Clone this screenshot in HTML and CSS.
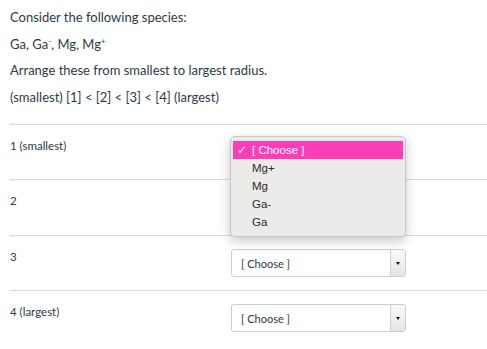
FILE: index.html
```html
<!DOCTYPE html>
<html lang="en">
<head>
    <meta charset="UTF-8">
    <title>Question</title>
    <link rel="stylesheet" href="styles.css">
</head>
<body>
    <div id="question">
        <div class="text">
            <p>Consider the following species:</p>
            <p>Ga, Ga<sup>-</sup>, Mg, Mg<sup>+</sup></p>
            <p>Arrange these from smallest to largest radius.</p>
            <p>(smallest) [1] &lt; [2] &lt; [3] &lt; [4] (largest)</p>
        </div>
        <div class="answers">
            <div class="row">
                <div class="label">1 (smallest)</div>
                <div class="select-wrap">
                    <div class="select"><span>[ Choose ]</span><i class="arrow"></i></div>
                    <ul class="menu">
                        <li class="on"><b>✓</b>[ Choose ]</li>
                        <li>Mg+</li>
                        <li>Mg</li>
                        <li>Ga-</li>
                        <li>Ga</li>
                    </ul>
                </div>
            </div>
            <div class="row">
                <div class="label">2</div>
                <div class="select-wrap">
                    <div class="select"><span>[ Choose ]</span><i class="arrow"></i></div>
                </div>
            </div>
            <div class="row">
                <div class="label">3</div>
                <div class="select-wrap">
                    <div class="select"><span>[ Choose ]</span><i class="arrow"></i></div>
                </div>
            </div>
            <div class="row">
                <div class="label">4 (largest)</div>
                <div class="select-wrap">
                    <div class="select"><span>[ Choose ]</span><i class="arrow"></i></div>
                </div>
            </div>
        </div>
    </div>
</body>
</html>
```

FILE: styles.css
```css
body{
    margin: 0;
    background: #fff;
    font-family: Lato, "Liberation Sans", sans-serif;
    color: #2d3b45;
}
#question{
    padding: 0 0 0 10px;
}
.text{
    padding-top: 9px;
    font-size: 13px;
    line-height: 16px;
}
.text p{
    margin: 0 0 10.7px 0;
}
.text sup{
    font-size: 8px;
    line-height: 0;
    vertical-align: 5px;
}
.answers{
    margin-top: 19px;
}
.row{
    display: flex;
    height: 55px;
    border-top: 1px solid #d9d9d9;
    box-sizing: border-box;
}
.row:nth-child(2),
.row:nth-child(4){
    height: 56px;
}
.label{
    width: 221px;
    padding-top: 14px;
    font-size: 11.5px;
    line-height: 14px;
}
.select-wrap{
    position: relative;
    padding-top: 13px;
}
.select{
    width: 175px;
    height: 28px;
    box-sizing: border-box;
    border: 1px solid #c8ced3;
    border-radius: 3px;
    background: #fff;
    display: flex;
    align-items: center;
    font-size: 11px;
    overflow: hidden;
}
.select span{
    flex: 1;
    padding-left: 9px;
}
.select .arrow{
    width: 14px;
    height: 100%;
    border-left: 1px solid #d0d0d0;
    background: linear-gradient(#fafafa, #e4e4e4);
    position: relative;
}
.select .arrow::after{
    content: "";
    position: absolute;
    left: 5px;
    top: 12px;
    border-left: 2.5px solid transparent;
    border-right: 2.5px solid transparent;
    border-top: 3px solid #111;
}
.menu{
    position: absolute;
    left: -1px;
    top: 11px;
    width: 176px;
    margin: 0;
    padding: 4px 2px 5px 2px;
    box-sizing: border-box;
    list-style: none;
    background: #ecebe9;
    border: 1px solid #c6c6c6;
    border-radius: 5px;
    box-shadow: 0 4px 12px rgba(0,0,0,0.22);
    font-family: "Liberation Sans", Arial, sans-serif;
    font-size: 11.5px;
    color: #2a2a2a;
    z-index: 10;
}
.menu li{
    height: 18px;
    line-height: 18px;
    padding-left: 19px;
    position: relative;
}
.menu li.on{
    background: #fd3cb8;
    color: #fff;
}
.menu li b{
    position: absolute;
    left: 4px;
    font-family: "DejaVu Sans", sans-serif;
    font-size: 12px;
    font-weight: bold;
}
```
